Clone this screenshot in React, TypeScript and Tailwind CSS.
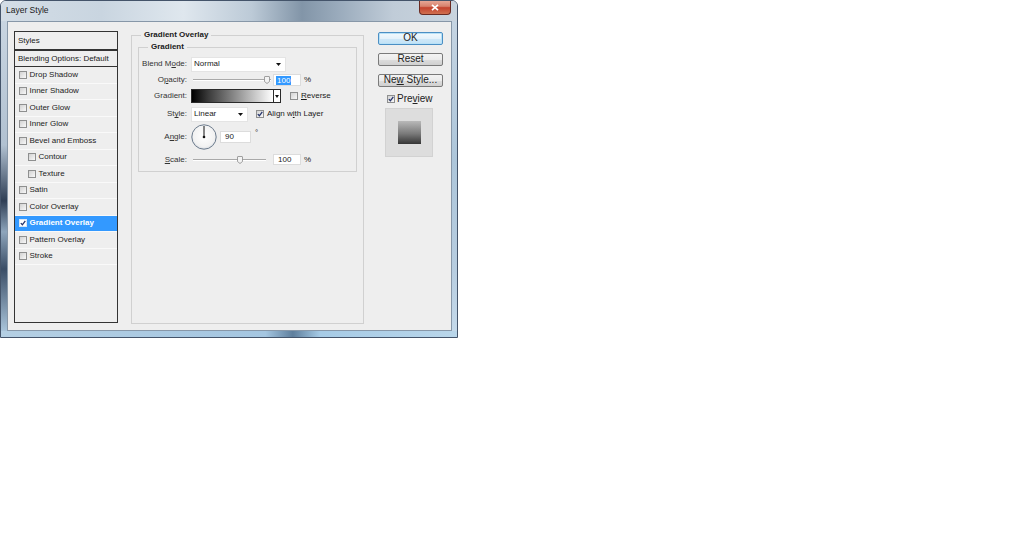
import clsx from "clsx";

const styleItems = [
  { label: "Drop Shadow" },
  { label: "Inner Shadow" },
  { label: "Outer Glow" },
  { label: "Inner Glow" },
  { label: "Bevel and Emboss" },
  { label: "Contour", nested: true },
  { label: "Texture", nested: true },
  { label: "Satin" },
  { label: "Color Overlay" },
  { label: "Gradient Overlay", on: true, active: true },
  { label: "Pattern Overlay" },
  { label: "Stroke" },
];

function Checkbox({ on = false, light = false }: { on?: boolean; light?: boolean }) {
  return (
    <span
      className={clsx(
        "flex h-[8px] w-[8px] shrink-0 items-center justify-center border",
        light
          ? "border-[#d8e6f5] bg-white"
          : "border-[#8e8f8f] bg-[linear-gradient(135deg,#d2d2d2,#f8f8f8)]"
      )}
    >
      {on && (
        <svg viewBox="0 0 6 6" className="h-[6px] w-[6px]">
          <path d="M0.8 3.1 L2.4 4.8 L5.3 0.9" fill="none" stroke="#25336b" strokeWidth="1.3" />
        </svg>
      )}
    </span>
  );
}

function Arrow() {
  return (
    <svg viewBox="0 0 5 3" className="h-[3px] w-[5px]">
      <path d="M0 0 H5 L2.5 3 Z" fill="#111" />
    </svg>
  );
}

function Thumb() {
  return (
    <svg viewBox="0 0 6 8" className="h-[8px] w-[6px]">
      <path d="M0.5 1 Q0.5 0.5 1 0.5 H5 Q5.5 0.5 5.5 1 V5.5 L3 7.5 L0.5 5.5 Z" fill="#f3f3f3" stroke="#8b8b8b" strokeWidth="0.8" />
    </svg>
  );
}

function Label({ children }: { children: React.ReactNode }) {
  return <div className="w-[48px] shrink-0 text-right text-[8px] leading-[10px] text-[#333]">{children}</div>;
}

export default function App() {
  return (
    <div className="h-[556px] w-[1024px] bg-white font-['Liberation_Sans',Arial,sans-serif] text-[#1a1a1a]">
      <div className="flex h-[338px] w-[458px] flex-col overflow-hidden rounded-t-[6px] border border-[#44546a]">
        {/* title bar */}
        <div className="relative flex h-[20px] shrink-0 items-center bg-[linear-gradient(90deg,#d3dde6_0%,#c9d5e0_22%,#dfe7ee_40%,#bccad7_55%,#8295a8_66%,#9aabbc_74%,#c0ccd8_86%,#c9d4de_100%)] pb-[2px] pl-[5px]">
          <span className="text-[8.5px] leading-[10px] text-[#1b1b1b]">Layer Style</span>
          <div className="absolute right-[6px] top-[-1px] flex h-[15px] w-[32px] items-center justify-center rounded-b-[4px] border border-t-0 border-[#6b2b22] bg-[linear-gradient(180deg,#e9ad9c_0%,#d8826d_45%,#c4432e_55%,#d0704f_100%)]">
            <svg viewBox="0 0 8 7" className="h-[7px] w-[8px]">
              <path d="M1 0.8 L7 6.2 M7 0.8 L1 6.2" stroke="#fff" strokeWidth="1.7" />
            </svg>
          </div>
        </div>

        <div className="flex flex-1">
          <div className="w-[6px] bg-[linear-gradient(180deg,#c9d5e1_0%,#b1c1d1_40%,#2f3f55_58%,#8ea5bb_68%,#3a4d66_80%,#a9c4da_100%)]" />

          {/* dialog body */}
          <div className="flex flex-1 border border-[#8797a8] bg-[#eeeeee] pl-[6px]">
            {/* styles list */}
            <div className="mt-[9px] flex h-[292px] w-[104px] flex-col border border-[#333] text-[8px] leading-[10px]">
              <div className="flex h-[19px] shrink-0 items-center border-b-2 border-[#333] pl-[3px]">Styles</div>
              <div className="flex h-[16px] shrink-0 items-center border-b border-[#333] pl-[3px]">Blending Options: Default</div>
              {styleItems.map((item) => (
                <div
                  key={item.label}
                  className={clsx(
                    "flex h-[16.5px] shrink-0 items-center gap-[2.5px] border-b border-[#f9f9f9]",
                    item.nested ? "pl-[13px]" : "pl-[4px]",
                    item.active ? "bg-[#3399ff] font-bold text-white" : "text-[#222]"
                  )}
                >
                  <Checkbox on={item.on} light={item.active} />
                  {item.label}
                </div>
              ))}
            </div>

            {/* gradient overlay group */}
            <fieldset className="ml-[13px] mt-[8px] h-[294px] w-[233px] border border-[#d0d0d0] px-[6px]">
              <legend className="ml-[3px] px-[3px] text-[8px] font-bold leading-[10px]">Gradient Overlay</legend>
              <fieldset className="mt-[2px] border border-[#d0d0d0] pb-[6px]">
                <legend className="ml-[9px] px-[3px] text-[8px] font-bold leading-[10px]">Gradient</legend>

                <div className="mt-[4.5px] flex h-[15px] items-center gap-[4px]">
                  <Label>
                    Blend M<u>o</u>de:
                  </Label>
                  <div className="flex h-[15px] w-[95px] items-center justify-between border border-[#e4e4e4] bg-white pl-[2px] pr-[4px] text-[8px]">
                    Normal
                    <Arrow />
                  </div>
                </div>

                <div className="mt-[2.5px] flex h-[12px] items-center gap-[4px]">
                  <Label>
                    O<u>p</u>acity:
                  </Label>
                  <div className="relative flex h-full w-[80px] items-center pl-[2px]">
                    <div className="h-[2px] flex-1 border-t border-b border-t-[#a9a9a9] border-b-white" />
                    <div className="absolute left-[73px] top-[2px]">
                      <Thumb />
                    </div>
                  </div>
                  <div className="-ml-[2px] flex h-[11.5px] w-[28px] items-center border border-[#dcdcdc] bg-white pl-[2px] text-[8px]">
                    <span className="bg-[#3399ff] px-[1px] leading-[9px] text-white">100</span>
                  </div>
                  <span className="-ml-[1px] text-[8px]">%</span>
                </div>

                <div className="mt-[3px] flex h-[14px] items-center gap-[4px]">
                  <Label>Gradient:</Label>
                  <div className="flex h-[14px] w-[90px] border border-[#2a2a2a]">
                    <div className="flex-1 bg-[linear-gradient(90deg,#000_0%,#3a3a3a_20%,#fff_100%)]" />
                    <div className="flex w-[7px] items-center justify-center border-l border-[#2a2a2a] bg-white">
                      <svg viewBox="0 0 4 3" className="h-[3px] w-[4px]">
                        <path d="M0 0 H4 L2 3 Z" fill="#111" />
                      </svg>
                    </div>
                  </div>
                  <div className="ml-[5px] flex items-center gap-[3px] text-[8px]">
                    <Checkbox />
                    <span>
                      <u>R</u>everse
                    </span>
                  </div>
                </div>

                <div className="mt-[4px] flex h-[14.5px] items-center gap-[4px]">
                  <Label>
                    St<u>y</u>le:
                  </Label>
                  <div className="flex h-[14.5px] w-[57px] items-center justify-between border border-[#e4e4e4] bg-white pl-[2px] pr-[4px] text-[8px]">
                    Linear
                    <Arrow />
                  </div>
                  <div className="ml-[4px] flex items-center gap-[3px] text-[8px]">
                    <Checkbox on />
                    <span>
                      Align w<u>i</u>th Layer
                    </span>
                  </div>
                </div>

                <div className="mt-[2.5px] flex h-[26px] items-center gap-[4px]">
                  <Label>
                    A<u>n</u>gle:
                  </Label>
                  <svg viewBox="0 0 26 26" className="h-[26px] w-[26px] shrink-0">
                    <defs>
                      <radialGradient id="dial" cx="50%" cy="45%" r="55%">
                        <stop offset="0%" stopColor="#ffffff" />
                        <stop offset="80%" stopColor="#f2f2f2" />
                        <stop offset="100%" stopColor="#d9dde2" />
                      </radialGradient>
                    </defs>
                    <circle cx="13" cy="13" r="12.2" fill="url(#dial)" stroke="#6c7b8c" strokeWidth="1" />
                    <line x1="13" y1="13" x2="13" y2="2" stroke="#111" strokeWidth="1" />
                    <circle cx="13" cy="13" r="1.3" fill="#111" />
                  </svg>
                  <div className="-ml-[1px] flex h-[11.5px] w-[31px] items-center border border-[#dcdcdc] bg-white pl-[4px] text-[8px]">90</div>
                  <span className="mb-[8px] text-[8px]">°</span>
                </div>

                <div className="mt-[4px] flex h-[11px] items-center gap-[4px]">
                  <Label>
                    <u>S</u>cale:
                  </Label>
                  <div className="relative flex h-full w-[75px] items-center pl-[2px]">
                    <div className="h-[2px] flex-1 border-t border-b border-t-[#a9a9a9] border-b-white" />
                    <div className="absolute left-[46px] top-[2px]">
                      <Thumb />
                    </div>
                  </div>
                  <div className="ml-[3px] flex h-[11px] w-[28px] items-center border border-[#dcdcdc] bg-white pl-[4px] text-[8px]">100</div>
                  <span className="-ml-[1px] text-[8px]">%</span>
                </div>
              </fieldset>
            </fieldset>

            {/* buttons */}
            <div className="ml-[14px] mt-[9.5px] flex w-[65px] flex-col text-[10px] leading-[12px] text-[#222]">
              <button className="flex h-[13px] items-center justify-center rounded-[2px] border border-[#4b8fc4] bg-[linear-gradient(180deg,#f2f9fd_0%,#e4f2fb_50%,#cfe8f8_51%,#c2e2f6_100%)] shadow-[inset_0_0_0_1px_#b8e1f7]">
                OK
              </button>
              <button className="mt-[8px] flex h-[13px] items-center justify-center rounded-[2px] border border-[#7a7a7a] bg-[linear-gradient(180deg,#f3f3f3_0%,#ebebeb_50%,#dddddd_51%,#d0d0d0_100%)]">
                Reset
              </button>
              <button className="mt-[8.3px] flex h-[13px] items-center justify-center rounded-[2px] border border-[#7a7a7a] bg-[linear-gradient(180deg,#f3f3f3_0%,#ebebeb_50%,#dddddd_51%,#d0d0d0_100%)]">
                <span>
                  Ne<u>w</u> Style...
                </span>
              </button>
              <div className="mt-[7px] flex h-[10px] items-center gap-[2px] pl-[9px]">
                <Checkbox on />
                <span>
                  Pre<u>v</u>iew
                </span>
              </div>
              <div className="ml-[7px] mt-[4px] flex h-[49.5px] w-[48px] items-center justify-center border border-[#d2d2d2] bg-[#dddddd]">
                <div className="h-[23px] w-[23px] bg-[linear-gradient(180deg,#b9b9b9_0%,#7a7a7a_55%,#353535_100%)]" />
              </div>
            </div>
          </div>

          <div className="w-[5px] bg-[linear-gradient(180deg,#c5d4e2_0%,#adc6da_45%,#b7cde0_80%,#c4d9ea_100%)]" />
        </div>

        <div className="h-[6px] shrink-0 bg-[linear-gradient(90deg,#b4cfe3_0%,#a4c6e1_58%,#5f7f9d_64%,#a6cbe6_70%,#b9d6ea_100%)]" />
      </div>
    </div>
  );
}
